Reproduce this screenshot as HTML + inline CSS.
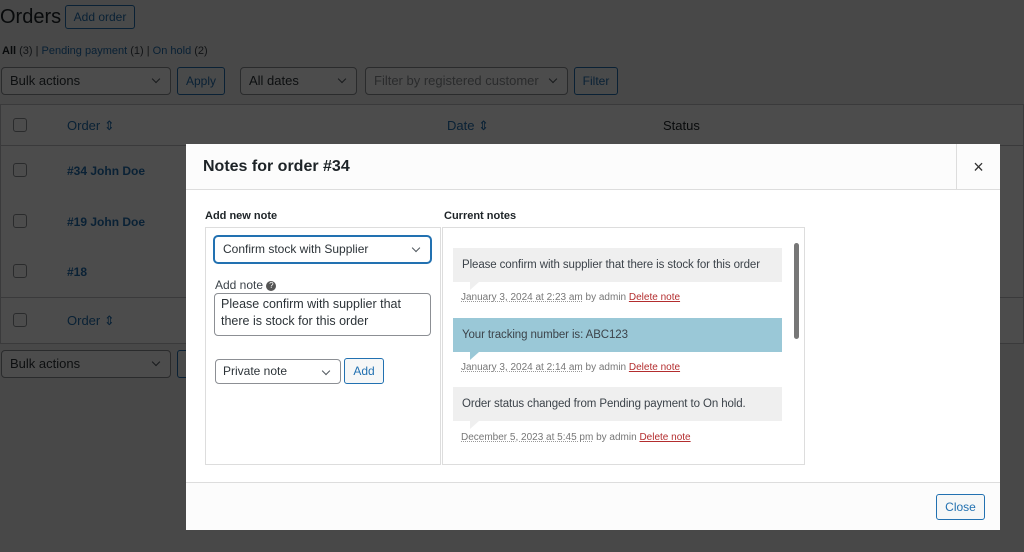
<!DOCTYPE html>
<html><head><style>
*{box-sizing:border-box}
body{margin:0;width:1024px;height:552px;overflow:hidden;background:#f0f0f1;font-family:"Liberation Sans",sans-serif;font-size:13px;color:#3c434a;position:relative}
.a{position:absolute}
.sel{position:absolute;border:1px solid #8c8f94;border-radius:4px;background:#fff;height:28px;padding:5px 8px;font-size:13px;color:#2c3338;white-space:nowrap}
.sel:after{content:"";position:absolute;right:11px;top:8px;width:5px;height:5px;border-right:1.5px solid #50575e;border-bottom:1.5px solid #50575e;transform:rotate(45deg)}
.btn{position:absolute;border:1px solid #2271b1;border-radius:3px;background:#f6f7f7;color:#2271b1;height:28px;font-size:12px;text-align:center;line-height:26px}
.cb{position:absolute;width:14px;height:14px;border:1px solid #8c8f94;border-radius:3px;background:#fff;left:13px}
.link{color:#2271b1}
.ov{position:absolute;left:0;top:0;width:1024px;height:552px;background:rgba(0,0,0,.7)}
.m{position:absolute;left:186px;top:144px;width:814px;height:386px;background:#fff}
.meta{position:absolute;font-size:10px;color:#777;white-space:nowrap}
.meta u{text-decoration:underline dotted #999}
.meta b{font-weight:normal;color:#b32d2e;text-decoration:underline}
.note{position:absolute;left:453px;width:329px;height:34px;background:#efefef;padding:11px 9px 9px;font-size:11.5px;color:#3c434a;white-space:nowrap;letter-spacing:-0.1px}
.note:after{content:"";position:absolute;left:17px;bottom:-8px;border-right:9px solid transparent;border-top:8px solid #efefef}
.note.b{background:#9ac8d7}.note.b:after{border-top-color:#9ac8d7}
</style></head><body>
<div class="a" style="left:0;top:6px;font-size:20px;color:#1d2327">Orders</div>
<div class="btn" style="left:65px;top:5px;width:70px;height:24px;line-height:22px">Add order</div>
<div class="a" style="left:2px;top:45px;font-size:11px"><b style="color:#1d2327;font-weight:600">All</b> (3) | <span class="link">Pending payment</span> (1) | <span class="link">On hold</span> (2)</div>
<div class="sel" style="left:1px;top:67px;width:170px">Bulk actions</div>
<div class="btn" style="left:177px;top:67px;width:48px">Apply</div>
<div class="sel" style="left:240px;top:67px;width:117px">All dates</div>
<div class="sel" style="left:365px;top:67px;width:203px;color:#8c8f94">Filter by registered customer</div>
<div class="btn" style="left:574px;top:67px;width:44px">Filter</div>
<div class="a" style="left:0;top:104px;width:1024px;height:240px;background:#fff;border:1px solid #c3c4c7"></div>
<div class="a" style="left:0;top:145px;width:1024px;border-top:1px solid #c3c4c7"></div>
<div class="a" style="left:0;top:297px;width:1024px;border-top:1px solid #c3c4c7"></div>
<div class="cb" style="top:118px"></div><div class="cb" style="top:163px"></div><div class="cb" style="top:214px"></div><div class="cb" style="top:264px"></div><div class="cb" style="top:313px"></div>
<div class="a link" style="left:67px;top:118px">Order ⇕</div>
<div class="a link" style="left:447px;top:118px">Date ⇕</div>
<div class="a" style="left:663px;top:118px;color:#1d2327">Status</div>
<div class="a link" style="left:67px;top:164px;font-weight:bold;font-size:12px">#34 John Doe</div>
<div class="a link" style="left:67px;top:215px;font-weight:bold;font-size:12px">#19 John Doe</div>
<div class="a link" style="left:67px;top:265px;font-weight:bold;font-size:12px">#18</div>
<div class="a link" style="left:67px;top:313px">Order ⇕</div>
<div class="sel" style="left:1px;top:350px;width:170px">Bulk actions</div>
<div class="btn" style="left:177px;top:350px;width:48px"></div>
<div class="ov"></div>
<div class="m">
 <div class="a" style="left:0;top:0;width:814px;height:46px;border-bottom:1px solid #ddd;background:#fcfcfc"></div>
 <div class="a" style="left:17px;top:14px;font-size:16px;font-weight:bold;color:#1d2327">Notes for order #34</div>
 <div class="a" style="left:770px;top:0;width:44px;height:46px;border-left:1px solid #ddd;text-align:center;line-height:46px;font-size:18px;color:#333">×</div>
 <div class="a" style="left:0;top:338px;width:814px;height:48px;border-top:1px solid #ddd;background:#fcfcfc"></div>
 <div class="btn" style="left:750px;top:350px;width:49px;height:26px;line-height:24px">Close</div>
</div>
<div class="a" style="left:205px;top:210px;font-size:11px;font-weight:bold;color:#1d2327">Add new note</div>
<div class="a" style="left:444px;top:210px;font-size:11px;font-weight:bold;color:#1d2327">Current notes</div>
<div class="a" style="left:205px;top:227px;width:236px;height:238px;border:1px solid #ddd"></div>
<div class="a" style="left:442px;top:227px;width:363px;height:238px;border:1px solid #ddd"></div>
<div class="sel" style="left:214px;top:236px;width:217px;height:27px;border-color:#2271b1;box-shadow:0 0 0 1px #2271b1;font-size:12px">Confirm stock with Supplier</div>
<div class="a" style="left:215px;top:278px;font-size:12px">Add note <span style="display:inline-block;width:10px;height:10px;border-radius:50%;background:#555;color:#fff;font-size:8px;text-align:center;line-height:10px;vertical-align:1px">?</span></div>
<div class="a" style="left:214px;top:293px;width:217px;height:43px;border:1px solid #8c8f94;border-radius:4px;padding:2px 12px 2px 6px;font-size:12.5px;line-height:17px;color:#2c3338">Please confirm with supplier that there is stock for this order</div>
<div class="sel" style="left:215px;top:359px;width:126px;height:25px;padding:4px 7px;font-size:12px">Private note</div>
<div class="btn" style="left:344px;top:358px;width:40px;height:26px;line-height:24px">Add</div>
<div class="a" style="left:794px;top:243px;width:5px;height:96px;background:#777;border-radius:3px"></div>
<div class="note" style="top:248px">Please confirm with supplier that there is stock for this order</div>
<div class="meta" style="left:461px;top:292px"><u>January 3, 2024 at 2:23 am</u> by admin <b>Delete note</b></div>
<div class="note b" style="top:318px">Your tracking number is: ABC123</div>
<div class="meta" style="left:461px;top:362px"><u>January 3, 2024 at 2:14 am</u> by admin <b>Delete note</b></div>
<div class="note" style="top:387px">Order status changed from Pending payment to On hold.</div>
<div class="meta" style="left:461px;top:432px"><u>December 5, 2023 at 5:45 pm</u> by admin <b>Delete note</b></div>
</body></html>
